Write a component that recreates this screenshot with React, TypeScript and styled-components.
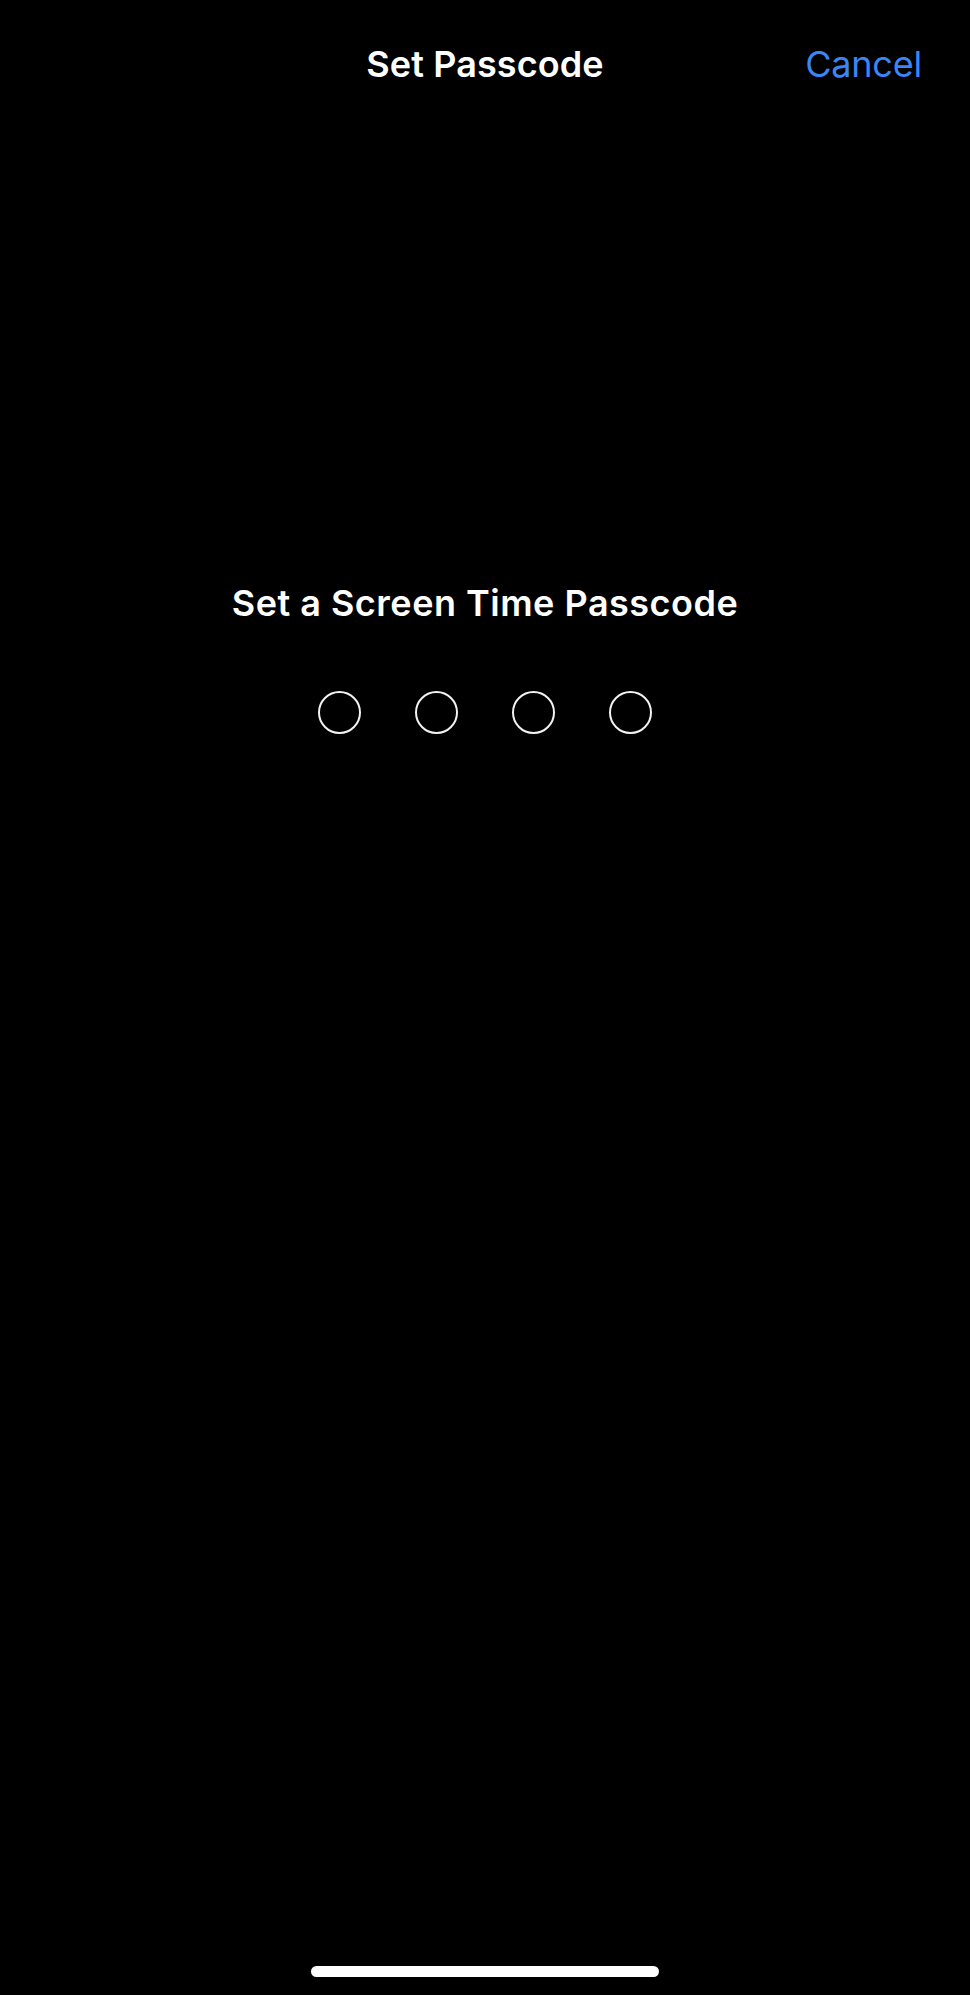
import styled, { createGlobalStyle } from 'styled-components';

const GlobalStyle = createGlobalStyle`
  html,
  body {
    margin: 0;
    padding: 0;
    background-color: #000;
  }

  * {
    box-sizing: border-box;
  }
`;

const Screen = styled.div`
  font-family: 'Inter', 'Noto Sans', sans-serif;
  width: 100%;
  min-height: 1995px;
  background-color: #000;
  color: #fff;
  display: flex;
  flex-direction: column;
  overflow: hidden;
`;

const NavBar = styled.div`
  display: grid;
  grid-template-columns: 1fr auto 1fr;
  align-items: center;
  padding: 42px 48px 0 48px;
`;

const NavTitle = styled.div`
  grid-column: 2;
  font-size: 36px;
  line-height: 44px;
  font-weight: 600;
  letter-spacing: 0.1px;
`;

const NavButton = styled.button`
  justify-self: end;
  background: none;
  border: none;
  padding: 0;
  font-family: inherit;
  font-size: 36px;
  line-height: 44px;
  font-weight: 400;
  letter-spacing: -0.2px;
  color: #3b86f6;
  cursor: pointer;
`;

const Body = styled.div`
  flex: 1;
  display: flex;
  flex-direction: column;
  align-items: center;
  padding-top: 495px;
`;

const Prompt = styled.div`
  font-size: 36px;
  line-height: 44px;
  font-weight: 600;
  letter-spacing: 0.5px;
`;

const Dots = styled.div`
  display: flex;
  gap: 54px;
  margin-top: 66px;
`;

const Dot = styled.span<{ $filled?: boolean }>`
  width: 43px;
  height: 43px;
  border-radius: 50%;
  border: 2px solid #f2f2f2;
  background-color: ${(p) => (p.$filled ? '#f2f2f2' : 'transparent')};
`;

const HomeBar = styled.div`
  display: flex;
  justify-content: center;
  padding-bottom: 18px;
`;

const HomeIndicator = styled.div`
  width: 348px;
  height: 11px;
  border-radius: 6px;
  background-color: #fff;
`;

const entered = 0;

function App() {
  return (
    <>
      <GlobalStyle />
      <Screen>
        <NavBar>
          <NavTitle>Set Passcode</NavTitle>
          <NavButton>Cancel</NavButton>
        </NavBar>
        <Body>
          <Prompt>Set a Screen Time Passcode</Prompt>
          <Dots>
            {[0, 1, 2, 3].map((i) => (
              <Dot key={i} $filled={i < entered} />
            ))}
          </Dots>
        </Body>
        <HomeBar>
          <HomeIndicator />
        </HomeBar>
      </Screen>
    </>
  );
}

export default App;
